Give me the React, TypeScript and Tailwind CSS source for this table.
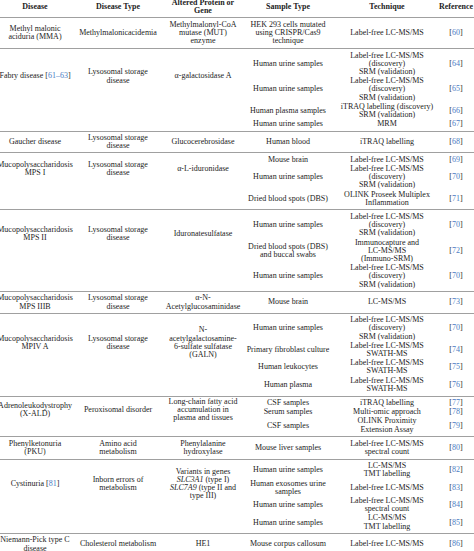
import React from 'react';

type Sub = { sample: React.ReactNode[]; tech: string[]; ref: string };
type Group = {
  disease: React.ReactNode[];
  type: string[];
  protein: React.ReactNode[];
  subs: Sub[];
  box?: string;
};

const Ref = ({ n }: { n: string }) => (
  <span>
    [<span className="text-[#4a7cc4]">{n}</span>]
  </span>
);

const LCD = ['Label-free LC-MS/MS', '(discovery)', 'SRM (validation)'];

const groups: Group[] = [
  {
    disease: ['Methyl malonic', 'aciduria (MMA)'],
    type: ['Methylmalonicacidemia'],
    protein: ['Methylmalonyl-CoA', 'mutase (MUT)', 'enzyme'],
    subs: [
      {
        sample: ['HEK 293 cells mutated', 'using CRISPR/Cas9', 'technique'],
        tech: ['Label-free LC-MS/MS'],
        ref: '60',
      },
    ],
  },
  {
    disease: [
      <span key="f">
        Fabry disease <Ref n="61–63" />
      </span>,
    ],
    type: ['Lysosomal storage', 'disease'],
    protein: ['α-galactosidase A'],
    box: 'self-start h-[51px]',
    subs: [
      { sample: ['Human urine samples'], tech: LCD, ref: '64' },
      { sample: ['Human urine samples'], tech: LCD, ref: '65' },
      { sample: ['Human plasma samples'], tech: ['iTRAQ labelling (discovery)', 'SRM (validation)'], ref: '66' },
      { sample: ['Human urine samples'], tech: ['MRM'], ref: '67' },
    ],
  },
  {
    disease: ['Gaucher disease'],
    type: ['Lysosomal storage', 'disease'],
    protein: ['Glucocerebrosidase'],
    subs: [{ sample: ['Human blood'], tech: ['iTRAQ labelling'], ref: '68' }],
  },
  {
    disease: ['Mucopolysaccharidosis', 'MPS I'],
    type: ['Lysosomal storage', 'disease'],
    protein: ['α-L-iduronidase'],
    box: 'self-start h-[28px]',
    subs: [
      { sample: ['Mouse brain'], tech: ['Label-free LC-MS/MS'], ref: '69' },
      { sample: ['Human urine samples'], tech: LCD, ref: '70' },
      { sample: ['Dried blood spots (DBS)'], tech: ['OLINK Proseek Multiplex', 'Inflammation'], ref: '71' },
    ],
  },
  {
    disease: ['Mucopolysaccharidosis', 'MPS II'],
    type: ['Lysosomal storage', 'disease'],
    protein: ['Iduronatesulfatase'],
    box: 'self-start h-[44px]',
    subs: [
      { sample: ['Human urine samples'], tech: LCD, ref: '70' },
      {
        sample: ['Dried blood spots (DBS)', 'and buccal swabs'],
        tech: ['Immunocapture and', 'LC-MS/MS', '(Immuno-SRM)'],
        ref: '72',
      },
      { sample: ['Human urine samples'], tech: LCD, ref: '70' },
    ],
  },
  {
    disease: ['Mucopolysaccharidosis', 'MPS IIIB'],
    type: ['Lysosomal storage', 'disease'],
    protein: ['α-N-', 'Acetylglucosaminidase'],
    subs: [{ sample: ['Mouse brain'], tech: ['LC-MS/MS'], ref: '73' }],
  },
  {
    disease: ['Mucopolysaccharidosis', 'MPIV A'],
    type: ['Lysosomal storage', 'disease'],
    protein: ['N-', 'acetylgalactosamine-', '6-sulfate sulfatase', '(GALN)'],
    box: 'self-start h-[54px]',
    subs: [
      { sample: ['Human urine samples'], tech: LCD, ref: '70' },
      { sample: ['Primary fibroblast culture'], tech: ['Label-free LC-MS/MS', 'SWATH-MS'], ref: '74' },
      { sample: ['Human leukocytes'], tech: ['Label-free LC-MS/MS', 'SWATH-MS'], ref: '75' },
      { sample: ['Human plasma'], tech: ['Label-free LC-MS/MS', 'SWATH-MS'], ref: '76' },
    ],
  },
  {
    disease: ['Adrenoleukodystrophy', '(X-ALD)'],
    type: ['Peroxisomal disorder'],
    protein: ['Long-chain fatty acid', 'accumulation in', 'plasma and tissues'],
    box: 'self-start h-[23px]',
    subs: [
      { sample: ['CSF samples'], tech: ['iTRAQ labelling'], ref: '77' },
      { sample: ['Serum samples'], tech: ['Multi-omic approach'], ref: '78' },
      { sample: ['CSF samples'], tech: ['OLINK Proximity', 'Extension Assay'], ref: '79' },
    ],
  },
  {
    disease: ['Phenylketonuria', '(PKU)'],
    type: ['Amino acid', 'metabolism'],
    protein: ['Phenylalanine', 'hydroxylase'],
    subs: [{ sample: ['Mouse liver samples'], tech: ['Label-free LC-MS/MS', 'spectral count'], ref: '80' }],
  },
  {
    disease: [
      <span key="c">
        Cystinuria <Ref n="81" />
      </span>,
    ],
    type: ['Inborn errors of', 'metabolism'],
    protein: [
      'Variants in genes',
      <span key="a">
        <i>SLC3A1</i> (type I)
      </span>,
      <span key="b">
        <i>SLC7A9</i> (type II and
      </span>,
      'type III)',
    ],
    box: 'self-start h-[45px]',
    subs: [
      { sample: ['Human urine samples'], tech: ['LC-MS/MS', 'TMT labelling'], ref: '82' },
      { sample: ['Human exosomes urine', 'samples'], tech: ['Label-free LC-MS/MS'], ref: '83' },
      { sample: ['Human urine samples'], tech: ['Label-free LC-MS/MS', 'spectral count'], ref: '84' },
      { sample: ['Human urine samples'], tech: ['LC-MS/MS', 'TMT labelling'], ref: '85' },
    ],
  },
  {
    disease: ['Niemann-Pick type C', 'disease'],
    type: ['Cholesterol metabolism'],
    protein: ['HE1'],
    subs: [{ sample: ['Mouse corpus callosum'], tech: ['Label-free LC-MS/MS'], ref: '86' }],
  },
];

const Cell = ({ lines, w }: { lines: React.ReactNode[]; w: string }) => (
  <div className={`${w} shrink-0 flex flex-col justify-center items-center text-center`}>
    {lines.map((l, i) => (
      <div key={i} className="whitespace-nowrap">
        {l}
      </div>
    ))}
  </div>
);

const W = ['w-[82px]', 'w-[84px]', 'w-[86px]', 'w-[84px]', 'w-[114px]', 'w-[24px]'];

export default function App() {
  return (
    <div className="w-[474px] h-[551px] overflow-hidden bg-white text-[#1c1c1c] font-['Liberation_Serif',serif] text-[8px] leading-[8.2px]">
      <div className="ml-[-6px] mt-[-3px] w-[480px]">
        <div className="flex border-b border-[#a0a0a0] py-[2px] font-bold">
          <Cell w={W[0]} lines={['Disease']} />
          <Cell w={W[1]} lines={['Disease Type']} />
          <Cell w={W[2]} lines={['Altered Protein or', 'Gene']} />
          <Cell w={W[3]} lines={['Sample Type']} />
          <Cell w={W[4]} lines={['Technique']} />
          <Cell w={W[5]} lines={['Reference']} />
        </div>
        {groups.map((g, gi) => (
          <div key={gi} className="flex border-b border-[#a0a0a0] py-[2px]">
            <div className={`flex shrink-0 ${g.box ?? 'self-stretch'}`}>
              <Cell w={W[0]} lines={g.disease} />
              <Cell w={W[1]} lines={g.type} />
              <Cell w={W[2]} lines={g.protein} />
            </div>
            <div className="flex flex-col justify-center">
              {g.subs.map((s, si) => (
                <div key={si} className="flex py-[0.5px]">
                  <Cell w={W[3]} lines={s.sample} />
                  <Cell w={W[4]} lines={s.tech} />
                  <Cell w={W[5]} lines={[<Ref key="r" n={s.ref} />]} />
                </div>
              ))}
            </div>
          </div>
        ))}
      </div>
    </div>
  );
}
